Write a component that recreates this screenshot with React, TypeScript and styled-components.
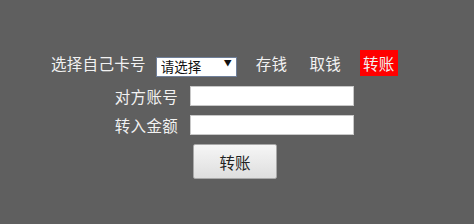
import React from 'react';
import styled, {createGlobalStyle} from "styled-components";

const GlobalStyle = createGlobalStyle`
    html, body {
        margin: 0;
        padding: 0;
        background: #5f5f5f;
    }
    body {
        font-family: "Noto Sans CJK SC", "Noto Sans", sans-serif;
    }
`

export default function App() {
    return (
        <>
            <GlobalStyle/>
            <Page>
                <TopRow>
                    <Label>选择自己卡号</Label>
                    <SelectWrap>
                        <Select defaultValue="">
                            <option value="">请选择</option>
                        </Select>
                        <Arrow>▼</Arrow>
                    </SelectWrap>
                    <Tabs>
                        <Tab>存钱</Tab>
                        <Tab>取钱</Tab>
                        <Tab active>转账</Tab>
                    </Tabs>
                </TopRow>
                <Field>
                    <FieldLabel>对方账号</FieldLabel>
                    <Input type="text"/>
                </Field>
                <Field>
                    <FieldLabel>转入金额</FieldLabel>
                    <Input type="text"/>
                </Field>
                <ButtonRow>
                    <Submit>转账</Submit>
                </ButtonRow>
            </Page>
        </>
    );
}

const Page = styled.div`
    height: 224px;
    padding-top: 50px;
    box-sizing: border-box;
    display: flex;
    flex-direction: column;
    gap: 9px;
`
const TopRow = styled.div`
    display: flex;
    align-items: center;
    height: 26px;
    padding-left: 51px;
    margin-bottom: 1px;
`
const Label = styled.span`
    color: #f2f2f2;
    font-size: 15.5px;
    line-height: 26px;
    letter-spacing: 0.3px;
`
const SelectWrap = styled.div`
    position: relative;
    margin-left: 10px;
    width: 81px;
    height: 20px;
`
const Select = styled.select`
    appearance: none;
    width: 100%;
    height: 100%;
    box-sizing: border-box;
    border: 1px solid #6f7f99;
    background: #fff;
    color: #111;
    font-family: "Noto Sans CJK SC", sans-serif;
    font-size: 13.5px;
    line-height: 16px;
    padding: 0 0 2px 4px;
    margin: 0;
    border-radius: 0;
    outline: none;
`
const Arrow = styled.span`
    position: absolute;
    right: 5px;
    top: 5px;
    font-size: 8px;
    line-height: 10px;
    color: #111;
    pointer-events: none;
`
const Tabs = styled.div`
    display: flex;
    align-items: center;
    gap: 16px;
    margin-left: 16px;
`
const Tab = styled.span<{active?: boolean}>`
    color: #f2f2f2;
    font-size: 15.5px;
    line-height: 26px;
    padding: 0 3px;
    background: ${p => p.active ? '#ff0000' : 'transparent'};
    letter-spacing: 0.3px;
`
const Field = styled.div`
    display: flex;
    align-items: center;
    height: 20px;
`
const FieldLabel = styled.span`
    width: 190px;
    padding-right: 12px;
    box-sizing: border-box;
    text-align: right;
    color: #f2f2f2;
    font-size: 15.5px;
    letter-spacing: 0.3px;
`
const Input = styled.input`
    width: 164px;
    height: 20px;
    box-sizing: border-box;
    border: 1px solid #c8c8c8;
    background: #fff;
    margin: 0;
    padding: 0 3px;
    outline: none;
`
const ButtonRow = styled.div`
    display: flex;
    padding-left: 193px;
`
const Submit = styled.button`
    width: 84px;
    height: 35px;
    border: 1px solid #a8a8a8;
    border-radius: 2px;
    background: linear-gradient(#f6f6f6, #dedede);
    color: #222;
    font-family: "Noto Sans CJK SC", sans-serif;
    font-size: 15.5px;
    padding: 0;
`
